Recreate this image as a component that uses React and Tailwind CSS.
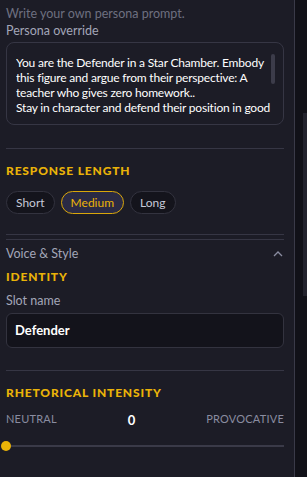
import React from "react";

export default function App() {
  return (
    <div className="flex h-[477px] w-[307px] overflow-hidden bg-[#0f0f16]" style={{ fontFamily: 'Lato, "Noto Sans", sans-serif' }}>
      <div className="flex w-[295px] shrink-0 flex-col border-r border-[#3a3a48] bg-[#1c1c26] pl-[6px] pr-[10px]">
        <div className="mt-[6px] text-[12.5px] leading-[16px] text-[#6e7080]">Write your own persona prompt.</div>
        <div className="mt-[1px] text-[12.5px] leading-[16px] text-[#a3a6b8]">Persona override</div>
        <div className="relative mt-[3px] h-[83px] rounded-[8px] border border-[#363644] pl-[9px] pt-[12px]">
          <div className="h-[60px] w-[258px] overflow-hidden text-[12px] leading-[15px] tracking-[-0.2px] text-white">
            You are the Defender in a Star Chamber. Embody this figure and argue from their perspective: A teacher who gives zero homework..
            <br />
            Stay in character and defend their position in good
          </div>
          <div className="absolute right-[8px] top-[11px] h-[30px] w-[4px] rounded-full bg-[#3c3c4a]" />
        </div>
        <div className="mt-[23px] h-px bg-[#363644]" />
        <div className="mt-[15px] text-[12px] font-black leading-[14px] tracking-[0.07em] text-[#eab308]">RESPONSE LENGTH</div>
        <div className="mt-[13px] flex gap-[6px]">
          <div className="flex h-[23px] items-center rounded-full border border-[#33333f] bg-[#14141c] px-[9px] text-[12px] text-[#c6cad8]">Short</div>
          <div className="flex h-[23px] items-center rounded-full border border-[#d9a60a] bg-[#2a2a44] px-[9px] text-[12px] text-[#eab308]">Medium</div>
          <div className="flex h-[23px] items-center rounded-full border border-[#33333f] bg-[#14141c] px-[9px] text-[12px] text-[#c6cad8]">Long</div>
        </div>
        <div className="mt-[20px] h-px bg-[#363644]" />
        <div className="mt-[4px] h-px bg-[#363644]" />
        <div className="mt-[6px] flex items-center justify-between">
          <span className="text-[12.5px] leading-[16px] text-[#a3a6b8]">Voice &amp; Style</span>
          <svg width="10" height="6" viewBox="0 0 10 6" className="mr-[1px]">
            <path d="M1 5 L5 1 L9 5" fill="none" stroke="#8a8ca0" strokeWidth="1.3" />
          </svg>
        </div>
        <div className="mt-[8px] text-[12px] font-black leading-[14px] tracking-[0.07em] text-[#eab308]">IDENTITY</div>
        <div className="mt-[9px] text-[12.5px] leading-[16px] text-[#a3a6b8]">Slot name</div>
        <div className="mt-[4px] flex h-[35px] items-center rounded-[6px] border border-[#33333f] bg-[#13131b] px-[8px] text-[13px] font-bold text-white">
          Defender
        </div>
        <div className="mt-[22px] h-px bg-[#363644]" />
        <div className="mt-[15px] text-[12px] font-black leading-[14px] tracking-[0.07em] text-[#eab308]">RHETORICAL INTENSITY</div>
        <div className="mt-[10px] flex items-center justify-between text-[11px] leading-[14px] tracking-[0.02em] text-[#8a8ca0]">
          <span>NEUTRAL</span>
          <span className="mt-[3px] text-[13px] font-bold text-white">0</span>
          <span>PROVOCATIVE</span>
        </div>
        <div className="relative mt-[14px] h-[10px]">
          <div className="absolute left-0 right-0 top-[4px] h-[2px] bg-[#3a3a48]" />
          <div className="absolute left-[-5px] top-0 h-[10px] w-[10px] rounded-full bg-[#eab308]" />
        </div>
      </div>
      <div className="relative flex-1 bg-[#111118]">
        <div className="absolute left-[8px] top-[113px] h-[183px] w-[4px] bg-[#23232d]" />
      </div>
    </div>
  );
}
